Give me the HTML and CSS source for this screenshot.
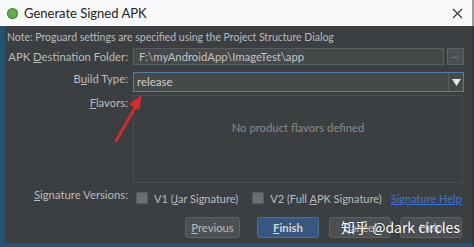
FILE: index.html
```html
<!DOCTYPE html>
<html lang="en">
<head>
  <meta charset="UTF-8" />
  <title>Generate Signed APK</title>
  <link rel="stylesheet" href="styles.css">
</head>
<body>
  <div class="window">
    <div class="titlebar">
      <span class="app-icon"></span>
      <span class="title">Generate Signed APK</span>
      <svg class="close" width="11" height="11" viewBox="0 0 11 11">
        <path d="M1 1 L10 10 M10 1 L1 10" stroke="#333" stroke-width="1.1" />
      </svg>
    </div>

    <div class="content">
      <div class="note">Note: Proguard settings are specified using the Project Structure Dialog</div>

      <div class="form">
        <div class="label"><span>APK <u>D</u>estination Folder:</span></div>
        <div class="field-row">
          <div class="input">F:\myAndroidApp\ImageTest\app</div>
          <div class="browse">...</div>
        </div>

        <div class="label"><span>B<u>u</u>ild Type:</span></div>
        <div class="select">
          <span>release</span>
          <span class="arrow"><svg width="9" height="7" viewBox="0 0 9 7"><path d="M0 0 H9 L4.5 7 Z" fill="#e8e8e8" /></svg></span>
        </div>

        <div class="label label-top"><span><u>F</u>lavors:</span></div>
        <div class="flavors">No product flavors defined</div>

        <div class="label"><span><u>S</u>ignature Versions:</span></div>
        <div class="sig-row">
          <span class="check"></span><span>V1 (<u>J</u>ar Signature)</span>
          <span class="check check-v2"></span><span>V2 (Full <u>A</u>PK Signature)</span>
          <a class="help-link">Signature Help</a>
        </div>
      </div>

      <div class="buttons">
        <div class="btn btn-prev"><u>P</u>revious</div>
        <div class="btn btn-finish"><u>F</u>inish</div>
        <div class="btn btn-cancel">Cancel</div>
        <div class="btn btn-help">Help</div>
      </div>
    </div>

    <svg class="red-arrow" width="40" height="54" viewBox="0 0 40 54">
      <path d="M4 49 L24 14" stroke="#e02a2a" stroke-width="2.6" stroke-linecap="round" />
      <path d="M30 3 L17 12 L27 18 Z" fill="#e02a2a" />
    </svg>

    <div class="watermark">知乎 @dark circles</div>
  </div>
</body>
</html>
```

FILE: styles.css
```css
body {
  margin: 0;
  font-family: Lato, "Noto Sans", sans-serif;
  font-size: 11.3px;
  color: #bbbbbb;
}
u {
  text-decoration-thickness: 1px;
  text-underline-offset: 1px;
}
.window {
  position: relative;
  width: 474px;
  height: 247px;
  display: flex;
  flex-direction: column;
  background: #3c3f41;
  overflow: hidden;
}
.titlebar {
  height: 26px;
  display: flex;
  align-items: center;
  background: #f7f9fb;
  border-right: 2px solid #9a9ea2;
  color: #222;
  font-size: 13px;
  padding-left: 8px;
}
.app-icon {
  width: 9px;
  height: 9px;
  border-radius: 50%;
  background: #5fae4a;
  box-shadow: 0 0 0 1px #3d7d33;
  margin-right: 7px;
}
.title {
  flex: 1;
}
.close {
  margin-right: 9px;
}
.content {
  flex: 1;
  border-left: 5px solid #235272;
  border-bottom: 4px solid #235272;
  border-right: 2px solid #2b3a45;
}
.note {
  padding: 3px 0 0 2px;
  height: 16px;
  line-height: 16px;
  font-size: 10.5px;
}
.form {
  display: grid;
  grid-template-columns: 123px 331px;
  column-gap: 5px;
  margin-top: 3px;
}
.label {
  display: flex;
  align-items: center;
  justify-content: flex-end;
  white-space: nowrap;
}
.label-top {
  align-items: flex-start;
  padding-top: 4px;
}
.field-row {
  display: flex;
  gap: 3px;
  height: 17px;
}
.input {
  flex: 1;
  background: #45494a;
  border: 1px solid #5a5d5f;
  padding-left: 5px;
  line-height: 15px;
  color: #c4c4c4;
}
.browse {
  width: 15px;
  background: #4c5052;
  border: 1px solid #5e6163;
  color: #999;
  font-size: 9px;
  text-align: center;
  line-height: 11px;
}
.select {
  margin-top: 7px;
  height: 20px;
  box-sizing: border-box;
  display: flex;
  background: #45494a;
  border: 1px solid #5780a4;
  line-height: 18px;
  color: #cfcfcf;
  font-size: 11.5px;
}
.select span:first-child {
  flex: 1;
  padding-left: 3px;
}
.arrow {
  width: 14px;
  border-left: 1px solid #5a5d5f;
  display: flex;
  align-items: center;
  justify-content: center;
}
.flavors {
  margin-top: 3px;
  height: 88px;
  width: 330px;
  box-sizing: border-box;
  border: 1px solid #4a4d50;
  color: #8b8b8b;
  text-align: center;
  padding-top: 25px;
}
.sig-row {
  margin-top: 7px;
  height: 16px;
  display: flex;
  align-items: center;
  white-space: nowrap;
  font-size: 11px;
}
.check {
  flex-shrink: 0;
  width: 10px;
  height: 10px;
  background: #6c6f71;
  border: 1px solid #58595b;
  margin: 0 6px 0 3px;
}
.check-v2 {
  margin-left: 14px;
}
.help-link {
  margin-left: 9px;
  color: #3d73dd;
  text-decoration: underline;
}
.buttons {
  display: flex;
  margin: 11px 0 0 180px;
}
.btn {
  height: 21px;
  box-sizing: border-box;
  background: #4c5052;
  border: 1px solid #5e6163;
  border-radius: 3px;
  text-align: center;
  line-height: 19px;
  color: #bbbbbb;
}
.btn-prev { width: 55px; }
.btn-finish {
  width: 62px;
  margin-left: 17px;
  background: #365880;
  border-color: #4c708c;
  color: #d6d6d6;
  font-weight: bold;
}
.btn-cancel { width: 62px; margin-left: 10px; }
.btn-help { width: 62px; margin-left: 9px; }
.red-arrow {
  position: absolute;
  left: 112px;
  top: 92px;
}
.watermark {
  position: absolute;
  left: 341px;
  top: 217px;
  color: #ffffff;
  font-family: "Noto Sans CJK SC", sans-serif;
  font-size: 14px;
  text-shadow: 0 0 2px rgba(0,0,0,0.4);
}
```
